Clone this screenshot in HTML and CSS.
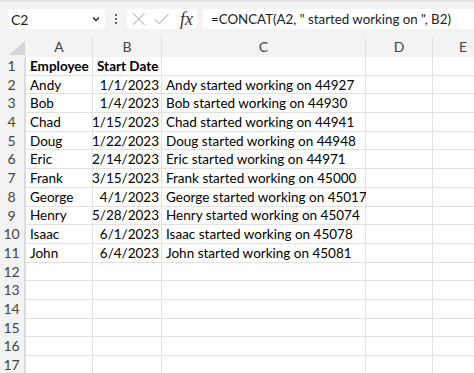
FILE: index.html
```html
<!DOCTYPE html>
<html>
<head>
<meta charset="utf-8">
<link rel="stylesheet" href="styles.css">
</head>
<body>
<div class="app">
  <div class="fbar">
    <div class="namebox"><span>C2</span>
      <svg class="chev" width="8" height="6" viewBox="0 0 8 6"><path d="M1 1.5 L4 4.5 L7 1.5" fill="none" stroke="#222" stroke-width="1.4"/></svg>
    </div>
    <div class="dots"><i></i><i></i><i></i></div>
    <div class="fxbox">
      <svg width="14" height="14" viewBox="0 0 14 14"><path d="M1 1 L13 13 M13 1 L1 13" stroke="#bcbcbc" stroke-width="1.1" fill="none"/></svg>
      <svg width="16" height="14" viewBox="0 0 16 14"><path d="M1 7.5 L5.5 12 L15 2" stroke="#bcbcbc" stroke-width="1.1" fill="none"/></svg>
      <span class="fx">fx</span>
    </div>
    <div class="formula">=CONCAT(A2, " started working on ", B2)</div>
  </div>
  <div class="grid">
    <div class="corner"><svg width="16" height="14" viewBox="0 0 16 14"><path d="M16 0 L16 14 L0 14 Z" fill="#d4d4d4"/></svg></div>
    <div class="ch">A</div><div class="ch">B</div><div class="ch">C</div><div class="ch">D</div><div class="ch last">E</div>

    <div class="rh">1</div><div class="c b">Employee</div><div class="c b">Start Date</div><div class="c"></div><div class="c"></div><div class="c"></div>
    <div class="rh">2</div><div class="c">Andy</div><div class="c r">1/1/2023</div><div class="c">Andy started working on 44927</div><div class="c"></div><div class="c"></div>
    <div class="rh">3</div><div class="c">Bob</div><div class="c r">1/4/2023</div><div class="c">Bob started working on 44930</div><div class="c"></div><div class="c"></div>
    <div class="rh">4</div><div class="c">Chad</div><div class="c r">1/15/2023</div><div class="c">Chad started working on 44941</div><div class="c"></div><div class="c"></div>
    <div class="rh">5</div><div class="c">Doug</div><div class="c r">1/22/2023</div><div class="c">Doug started working on 44948</div><div class="c"></div><div class="c"></div>
    <div class="rh">6</div><div class="c">Eric</div><div class="c r">2/14/2023</div><div class="c">Eric started working on 44971</div><div class="c"></div><div class="c"></div>
    <div class="rh">7</div><div class="c">Frank</div><div class="c r">3/15/2023</div><div class="c">Frank started working on 45000</div><div class="c"></div><div class="c"></div>
    <div class="rh">8</div><div class="c">George</div><div class="c r">4/1/2023</div><div class="c">George started working on 45017</div><div class="c"></div><div class="c"></div>
    <div class="rh">9</div><div class="c">Henry</div><div class="c r">5/28/2023</div><div class="c">Henry started working on 45074</div><div class="c"></div><div class="c"></div>
    <div class="rh">10</div><div class="c">Isaac</div><div class="c r">6/1/2023</div><div class="c">Isaac started working on 45078</div><div class="c"></div><div class="c"></div>
    <div class="rh">11</div><div class="c">John</div><div class="c r">6/4/2023</div><div class="c">John started working on 45081</div><div class="c"></div><div class="c"></div>
    <div class="rh">12</div><div class="c"></div><div class="c"></div><div class="c"></div><div class="c"></div><div class="c"></div>
    <div class="rh">13</div><div class="c"></div><div class="c"></div><div class="c"></div><div class="c"></div><div class="c"></div>
    <div class="rh">14</div><div class="c"></div><div class="c"></div><div class="c"></div><div class="c"></div><div class="c"></div>
    <div class="rh">15</div><div class="c"></div><div class="c"></div><div class="c"></div><div class="c"></div><div class="c"></div>
    <div class="rh">16</div><div class="c"></div><div class="c"></div><div class="c"></div><div class="c"></div><div class="c"></div>
    <div class="rh">17</div><div class="c"></div><div class="c"></div><div class="c"></div><div class="c"></div><div class="c"></div>
  </div>
</div>
</body>
</html>
```
FILE: styles.css
```css
html, body { margin: 0; padding: 0; }
body {
  width: 474px; height: 373px; overflow: hidden;
  background: #f3f3f3;
  font-family: "Lato", "Liberation Sans", sans-serif;
  color: #000;
}
.app { display: flex; flex-direction: column; height: 373px; }
.fbar {
  height: 37px; box-sizing: border-box;
  padding: 9px 0 8px 8px;
  display: flex; align-items: stretch; gap: 0;
  background: linear-gradient(#dcdcdc 0, #ececec 2px, #f3f3f3 5px);
}
.namebox {
  width: 97px; box-sizing: border-box; background: #fff; border-radius: 4px;
  display: flex; align-items: center; justify-content: space-between;
  padding: 0 5px 0 3px; font-size: 14px; color: #222;
}
.dots { width: 22px; display: flex; flex-direction: column; align-items: center; justify-content: center; gap: 2px; }
.dots i { width: 2px; height: 2px; background: #333; border-radius: 1px; display: block; }
.fxbox {
  width: 70px; box-sizing: border-box; background: #fff; border-radius: 4px;
  display: flex; align-items: center; gap: 8px; padding: 0 4px 0 5px;
}
.fx { font-family: "Liberation Serif", serif; font-style: italic; font-size: 18px; color: #333; margin-left: 3px; }
.formula {
  flex: 1; margin-left: 6px; background: #fff; border-radius: 4px 0 0 4px;
  display: flex; align-items: center; padding-left: 8px; font-size: 13.3px; color: #222; white-space: nowrap;
}
.grid {
  display: grid;
  grid-template-columns: 26px 67px 69px 204px 67px 60px;
  grid-template-rows: 20px repeat(17, 18.7px);
  font-size: 13.5px;
  width: 493px;
}
.corner { background: #f3f3f3; display: flex; align-items: flex-end; justify-content: flex-end; padding: 0 1px 2px 0; box-sizing: border-box; }
.ch {
  background: #f3f3f3; color: #444; text-align: center; line-height: 20px; font-size: 14px;
  border-right: 1px solid #e0e0e0; box-sizing: border-box;
}
.ch.last { border-right: 0; }
.rh {
  background: #f3f3f3; color: #444; text-align: center; line-height: 18.7px; font-size: 14px;
  border-right: 2px solid #dcdcdc; box-sizing: border-box; padding-right: 1px;
}
.c {
  background: #fff; border-right: 1px solid #e1e1e1; border-bottom: 1px solid #e1e1e1;
  box-sizing: border-box; padding: 0 3px 0 4px; line-height: 18px; white-space: nowrap;
  display: flex; align-items: center;
}
.c.r { justify-content: flex-end; padding-right: 2px; }
.c.b { font-weight: bold; }
```
